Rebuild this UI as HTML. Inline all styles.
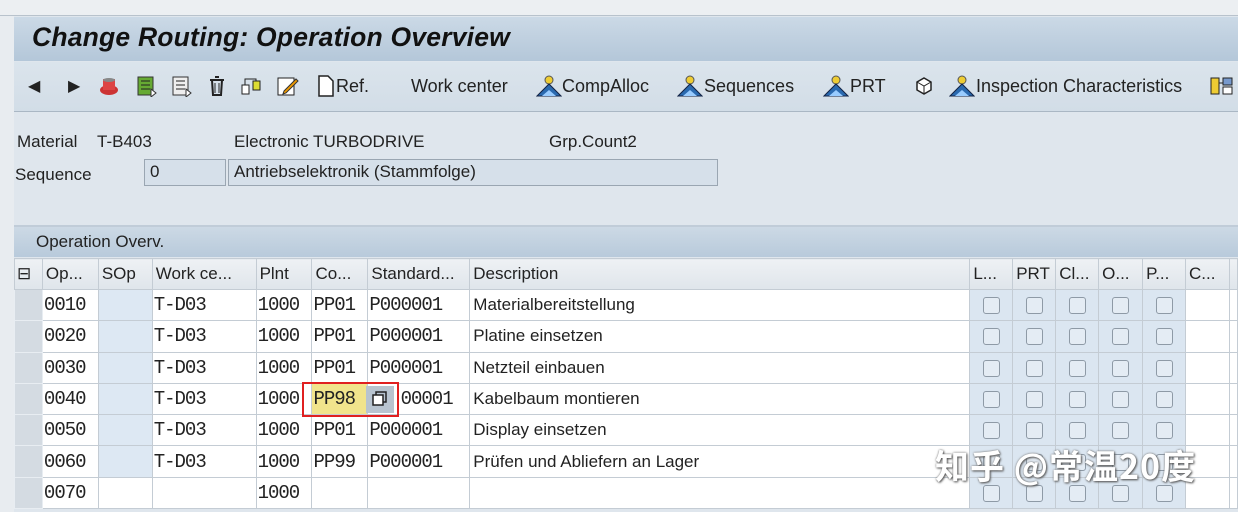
<!DOCTYPE html>
<html><head><meta charset="utf-8"><style>
*{margin:0;padding:0;box-sizing:border-box}
body{width:1238px;height:512px;overflow:hidden;background:#dfe6ed;font-family:"Liberation Sans",sans-serif;color:#222;position:relative}
.abs{position:absolute}
.top{left:0;top:0;width:1238px;height:16px;background:#eceff2;border-bottom:1px solid #b8c2cc}
.title{left:14px;top:17px;width:1224px;height:44px;background:linear-gradient(#cbd9e6,#b4c7d9);font-weight:bold;font-style:italic;font-size:26.5px;padding:5px 0 0 18px;color:#111;letter-spacing:0.2px}
.tb{left:14px;top:62px;width:1224px;height:50px;background:linear-gradient(#dbe4ec,#d2dde7);border-bottom:1px solid #aab7c4;font-size:18px}
.tb span{position:absolute;top:14px;white-space:nowrap}
.lbl{font-size:17px;white-space:nowrap}
.fld{border:1px solid #9aa6b2;background:#d6e0ea;height:27px;font-size:17px;padding:2px 5px}
.sec{left:14px;top:225px;width:1224px;height:32px;background:linear-gradient(#ccd9e5,#b8cadb);border-top:2px solid #c0ccd8;font-size:17px;padding:5px 0 0 22px}
table{position:absolute;left:14px;top:258px;border-collapse:collapse;table-layout:fixed}
td,th{border:1px solid #c4ccd4;height:31.3px;font-size:17px;white-space:nowrap;overflow:hidden;padding:0 3px;text-align:left;font-weight:normal}
th{background:linear-gradient(#eef1f4,#dfe5eb);height:31px}
td{background:#fff}
td.m{font-family:"Liberation Mono",monospace;font-size:19px;letter-spacing:-1px;padding:0 1px}
td.sel{background:#d4dbe2;border-color:#e8edf2}
td.sop{background:#dde8f3}
td.cb{background:#dbe6f1;text-align:center}
.box{display:inline-block;width:17px;height:17px;border:1.5px solid #8e9aa6;border-radius:3px;background:#e4ecf4;vertical-align:middle}
.wm{left:935px;top:440px;font-family:"Noto Sans CJK SC",sans-serif;font-size:34px;font-weight:bold;color:#fff;text-shadow:1px 1px 2px #555,0 0 2px #777;white-space:nowrap;letter-spacing:1px}
</style></head><body>
<div class="abs top"></div>
<div class="abs" style="left:0;top:16px;width:14px;height:496px;background:#e8ecf0"></div>
<div class="abs title">Change Routing: Operation Overview</div>
<div class="abs tb">
<span style="left:14px;font-size:16px">◀</span>
<span style="left:54px;font-size:16px">▶</span>
<span style="left:84px;top:13px"><svg width="22" height="22"><ellipse cx="11" cy="15" rx="9" ry="5" fill="#c33"/><rect x="5" y="4" width="12" height="11" fill="#d44"/><ellipse cx="11" cy="5" rx="6" ry="2" fill="#888"/></svg></span>
<span style="left:122px;top:13px"><svg width="22" height="22"><rect x="2" y="2" width="15" height="18" fill="#6a3" stroke="#333"/><path d="M5 6h9M5 10h9M5 14h9" stroke="#222"/><path d="M15 14l5 4-5 4z" fill="#fff" stroke="#333"/></svg></span>
<span style="left:157px;top:13px"><svg width="22" height="22"><rect x="2" y="2" width="15" height="18" fill="#eee" stroke="#333"/><path d="M5 6h9M5 10h9M5 14h9" stroke="#222"/><path d="M15 14l5 4-5 4z" fill="#fff" stroke="#333"/></svg></span>
<span style="left:193px;top:13px"><svg width="20" height="22"><path d="M3 5h14M8 2h4M5 5l1 15h8l1-15" fill="none" stroke="#222" stroke-width="2"/><path d="M8 8v10M12 8v10" stroke="#222"/></svg></span>
<span style="left:226px;top:13px"><svg width="22" height="22"><rect x="2" y="10" width="7" height="9" fill="#fff" stroke="#222"/><rect x="13" y="6" width="7" height="9" fill="#dd3" stroke="#222"/><path d="M5 10V4h11v2" fill="none" stroke="#222"/></svg></span>
<span style="left:262px;top:13px"><svg width="24" height="22"><rect x="2" y="3" width="16" height="17" fill="#fff" stroke="#222"/><path d="M8 16l12-12 2 2-12 12-3 1z" fill="#e90" stroke="#333"/></svg></span>
<span style="left:303px;top:13px"><svg width="18" height="22"><path d="M2 1h9l5 5v15H2z" fill="#fff" stroke="#222" stroke-width="1.5"/></svg></span>
<span style="left:322px">Ref.</span>
<span style="left:397px">Work center</span>
<span style="left:522px;top:12px"><svg width="26" height="24"><circle cx="13" cy="6" r="4" fill="#ec3" stroke="#555"/><path d="M1 22L13 10 25 22z" fill="#2a6ab0" stroke="#124"/><path d="M6 22l7-6 7 6" fill="#9cf"/></svg></span>
<span style="left:548px">CompAlloc</span>
<span style="left:663px;top:12px"><svg width="26" height="24"><circle cx="13" cy="6" r="4" fill="#ec3" stroke="#555"/><path d="M1 22L13 10 25 22z" fill="#2a6ab0" stroke="#124"/><path d="M6 22l7-6 7 6" fill="#9cf"/></svg></span>
<span style="left:690px">Sequences</span>
<span style="left:809px;top:12px"><svg width="26" height="24"><circle cx="13" cy="6" r="4" fill="#ec3" stroke="#555"/><path d="M1 22L13 10 25 22z" fill="#2a6ab0" stroke="#124"/><path d="M6 22l7-6 7 6" fill="#9cf"/></svg></span>
<span style="left:836px">PRT</span>
<span style="left:899px;top:13px"><svg width="22" height="22"><path d="M4 7l7-4 7 4v8l-7 4-7-4z" fill="#fff" stroke="#222" stroke-width="1.5"/><path d="M4 7l7 4 7-4M11 11v8" fill="none" stroke="#222"/></svg></span>
<span style="left:935px;top:12px"><svg width="26" height="24"><circle cx="13" cy="6" r="4" fill="#ec3" stroke="#555"/><path d="M1 22L13 10 25 22z" fill="#2a6ab0" stroke="#124"/><path d="M6 22l7-6 7 6" fill="#9cf"/></svg></span>
<span style="left:962px">Inspection Characteristics</span>
<span style="left:1196px;top:13px"><svg width="24" height="22"><rect x="1" y="3" width="8" height="16" fill="#ec3" stroke="#222"/><rect x="13" y="3" width="9" height="7" fill="#79c" stroke="#222"/><rect x="13" y="12" width="9" height="7" fill="#fff" stroke="#222"/><path d="M9 8h4" stroke="#222"/></svg></span>
</div>
<div class="abs lbl" style="left:17px;top:132px">Material</div>
<div class="abs lbl" style="left:97px;top:132px">T-B403</div>
<div class="abs lbl" style="left:234px;top:132px">Electronic TURBODRIVE</div>
<div class="abs lbl" style="left:549px;top:132px">Grp.Count2</div>
<div class="abs lbl" style="left:15px;top:165px">Sequence</div>
<div class="abs fld" style="left:144px;top:159px;width:82px">0</div>
<div class="abs fld" style="left:228px;top:159px;width:490px">Antriebselektronik (Stammfolge)</div>
<div class="abs sec">Operation Overv.</div>
<table>
<colgroup><col style="width:28px"><col style="width:56px"><col style="width:54px"><col style="width:104px"><col style="width:56px"><col style="width:56px"><col style="width:102px"><col style="width:502px"><col style="width:43px"><col style="width:43px"><col style="width:43px"><col style="width:44px"><col style="width:43px"><col style="width:44px"><col style="width:8px"></colgroup>
<tr><th style="padding:0 2px">⊟</th><th>Op...</th><th>SOp</th><th>Work ce...</th><th>Plnt</th><th>Co...</th><th>Standard...</th><th>Description</th><th>L...</th><th>PRT</th><th>Cl...</th><th>O...</th><th>P...</th><th>C...</th><th></th></tr>
<tr><td class="sel"></td><td class="m">0010</td><td class="sop"></td><td class="m">T-D03</td><td class="m">1000</td><td class="m">PP01</td><td class="m">P000001</td><td>Materialbereitstellung</td><td class="cb"><span class="box"></span></td><td class="cb"><span class="box"></span></td><td class="cb"><span class="box"></span></td><td class="cb"><span class="box"></span></td><td class="cb"><span class="box"></span></td><td></td><td></td></tr>
<tr><td class="sel"></td><td class="m">0020</td><td class="sop"></td><td class="m">T-D03</td><td class="m">1000</td><td class="m">PP01</td><td class="m">P000001</td><td>Platine einsetzen</td><td class="cb"><span class="box"></span></td><td class="cb"><span class="box"></span></td><td class="cb"><span class="box"></span></td><td class="cb"><span class="box"></span></td><td class="cb"><span class="box"></span></td><td></td><td></td></tr>
<tr><td class="sel"></td><td class="m">0030</td><td class="sop"></td><td class="m">T-D03</td><td class="m">1000</td><td class="m">PP01</td><td class="m">P000001</td><td>Netzteil einbauen</td><td class="cb"><span class="box"></span></td><td class="cb"><span class="box"></span></td><td class="cb"><span class="box"></span></td><td class="cb"><span class="box"></span></td><td class="cb"><span class="box"></span></td><td></td><td></td></tr>
<tr><td class="sel"></td><td class="m">0040</td><td class="sop"></td><td class="m">T-D03</td><td class="m">1000</td><td class="m" style="background:#f1e48c">PP98</td><td class="m">&nbsp;&nbsp;&nbsp;00001</td><td>Kabelbaum montieren</td><td class="cb"><span class="box"></span></td><td class="cb"><span class="box"></span></td><td class="cb"><span class="box"></span></td><td class="cb"><span class="box"></span></td><td class="cb"><span class="box"></span></td><td></td><td></td></tr>
<tr><td class="sel"></td><td class="m">0050</td><td class="sop"></td><td class="m">T-D03</td><td class="m">1000</td><td class="m">PP01</td><td class="m">P000001</td><td>Display einsetzen</td><td class="cb"><span class="box"></span></td><td class="cb"><span class="box"></span></td><td class="cb"><span class="box"></span></td><td class="cb"><span class="box"></span></td><td class="cb"><span class="box"></span></td><td></td><td></td></tr>
<tr><td class="sel"></td><td class="m">0060</td><td class="sop"></td><td class="m">T-D03</td><td class="m">1000</td><td class="m">PP99</td><td class="m">P000001</td><td>Prüfen und Abliefern an Lager</td><td class="cb"><span class="box"></span></td><td class="cb"><span class="box"></span></td><td class="cb"><span class="box"></span></td><td class="cb"><span class="box"></span></td><td class="cb"><span class="box"></span></td><td></td><td></td></tr>
<tr><td class="sel"></td><td class="m">0070</td><td></td><td></td><td class="m">1000</td><td></td><td></td><td></td><td class="cb"><span class="box"></span></td><td class="cb"><span class="box"></span></td><td class="cb"><span class="box"></span></td><td class="cb"><span class="box"></span></td><td class="cb"><span class="box"></span></td><td></td><td></td></tr>
</table>
<div class="abs" style="left:366px;top:386px;width:28px;height:27px;background:#b8c4d0"><svg width="28" height="27"><rect x="7" y="9" width="10" height="10" fill="#fff" stroke="#222" stroke-width="1.5"/><path d="M10 9V6h10v10h-3" fill="none" stroke="#222" stroke-width="1.5"/></svg></div>
<div class="abs" style="left:302px;top:382px;width:97px;height:35px;border:2.5px solid #e02020"></div>
<div class="abs wm">知乎 @常温20度</div>
</body></html>
